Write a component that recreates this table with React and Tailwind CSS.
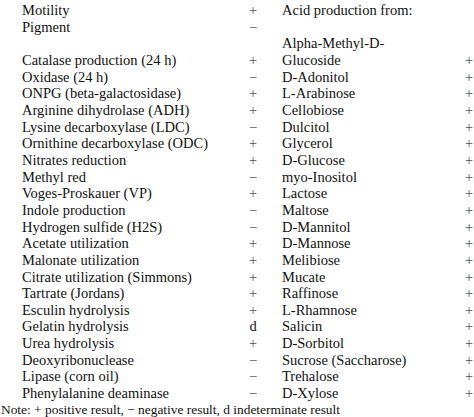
const rows = [
  ["Motility", "+", "Acid production from:", ""],
  ["Pigment", "−", "", ""],
  ["", "", "Alpha-Methyl-D-", ""],
  ["Catalase production (24 h)", "+", "Glucoside", "+"],
  ["Oxidase (24 h)", "−", "D-Adonitol", "+"],
  ["ONPG (beta-galactosidase)", "+", "L-Arabinose", "+"],
  ["Arginine dihydrolase (ADH)", "+", "Cellobiose", "+"],
  ["Lysine decarboxylase (LDC)", "−", "Dulcitol", "+"],
  ["Ornithine decarboxylase (ODC)", "+", "Glycerol", "+"],
  ["Nitrates reduction", "+", "D-Glucose", "+"],
  ["Methyl red", "−", "myo-Inositol", "+"],
  ["Voges-Proskauer (VP)", "+", "Lactose", "+"],
  ["Indole production", "−", "Maltose", "+"],
  ["Hydrogen sulfide (H2S)", "−", "D-Mannitol", "+"],
  ["Acetate utilization", "+", "D-Mannose", "+"],
  ["Malonate utilization", "+", "Melibiose", "+"],
  ["Citrate utilization (Simmons)", "+", "Mucate", "+"],
  ["Tartrate (Jordans)", "+", "Raffinose", "+"],
  ["Esculin hydrolysis", "+", "L-Rhamnose", "+"],
  ["Gelatin hydrolysis", "d", "Salicin", "+"],
  ["Urea hydrolysis", "+", "D-Sorbitol", "+"],
  ["Deoxyribonuclease", "−", "Sucrose (Saccharose)", "+"],
  ["Lipase (corn oil)", "−", "Trehalose", "+"],
  ["Phenylalanine deaminase", "−", "D-Xylose", "+"],
];

function Sign({ value }) {
  const isD = value === "d";
  return (
    <div className={isD ? "text-center text-[#111]" : "text-center text-[#555]"}>
      {value || "\u00a0"}
    </div>
  );
}

export default function App() {
  return (
    <div
      className="w-[474px] h-[417px] bg-white text-[#111] text-[14.5px] leading-[16.65px] pt-[2px] overflow-hidden"
      style={{ fontFamily: '"Liberation Serif", "Times New Roman", serif' }}
    >
      <div className="grid grid-cols-[22px_222px_18px_20px_180px_14px]">
        {rows.map((r, i) => (
          <div key={i} className="contents">
            <div />
            <div className="whitespace-nowrap">{r[0] || "\u00a0"}</div>
            <Sign value={r[1]} />
            <div />
            <div className="whitespace-nowrap">{r[2] || "\u00a0"}</div>
            <Sign value={r[3]} />
          </div>
        ))}
      </div>
      <div className="whitespace-nowrap pl-[1px] text-[13.4px] leading-[16.65px]">
        Note: + positive result, − negative result, d indeterminate result
      </div>
    </div>
  );
}
